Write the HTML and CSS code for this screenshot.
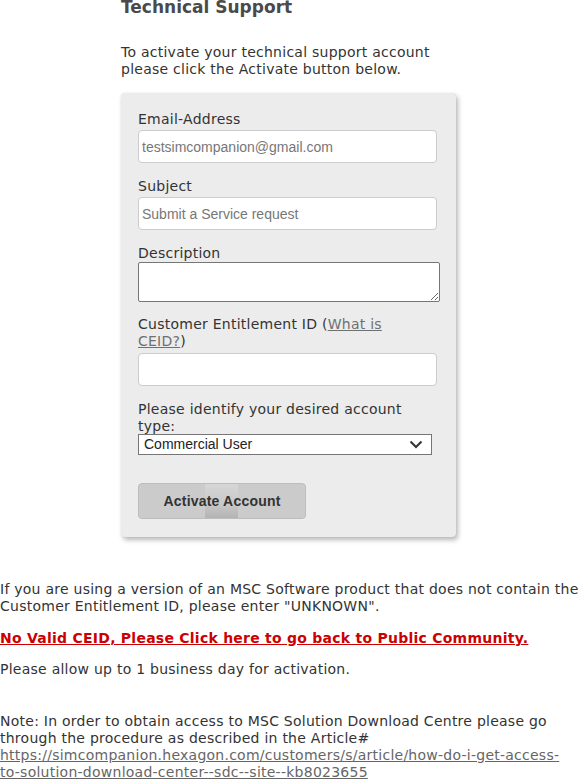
FILE: index.html
```html
<!DOCTYPE html>
<html lang="en">
<head>
<meta charset="utf-8">
<title>Technical Support</title>
<link rel="stylesheet" href="styles.css">
</head>
<body>
<div class="page">
  <section class="main">
    <h2 class="title">Technical Support</h2>
    <p class="intro">To activate your technical support account<br>please click the Activate button below.</p>
    <form class="card">
      <div class="field">
        <label class="label">Email-Address</label>
        <input class="text-input value-muted" type="text" value="testsimcompanion@gmail.com">
      </div>
      <div class="field">
        <label class="label">Subject</label>
        <input class="text-input value-muted" type="text" value="Submit a Service request">
      </div>
      <div class="field">
        <label class="label">Description</label>
        <textarea class="textarea"></textarea>
      </div>
      <div class="field field-ceid">
        <label class="label">Customer Entitlement ID (<a class="help-link" href="#">What is<br>CEID?</a>)</label>
        <input class="text-input" type="text">
      </div>
      <div class="field field-select">
        <label class="label">Please identify your desired account<br>type:</label>
        <div class="select-wrap">
          <select class="select">
            <option>Commercial User</option>
          </select>
          <svg class="chevron" width="14" height="9" viewBox="0 0 14 9"><path d="M1.5 1.5 L7 7 L12.5 1.5" fill="none" stroke="#333" stroke-width="2"/></svg>
        </div>
      </div>
      <button class="activate" type="button"><span class="activate-text">Activate Account</span></button>
    </form>
  </section>
  <section class="info">
    <p class="para">If you are using a version of an MSC Software product that does not contain the<br>Customer Entitlement ID, please enter "UNKNOWN".</p>
    <p class="para para-red"><a class="red-link" href="#">No Valid CEID, Please Click here to go back to Public Community.</a></p>
    <p class="para">Please allow up to 1 business day for activation.</p>
    <p class="para para-note">Note: In order to obtain access to MSC Solution Download Centre please go<br>through the procedure as described in the Article#<br><a class="url-link" href="#">https://simcompanion.hexagon.com/customers/s/article/how-do-i-get-access-<br>to-solution-download-center--sdc--site--kb8023655</a></p>
  </section>
</div>
</body>
</html>
```

FILE: styles.css
```css
html, body {
  margin: 0;
  padding: 0;
  background: #ffffff;
}

body {
  font-family: "DejaVu Sans", Verdana, sans-serif;
  font-size: 14px;
  line-height: 17px;
  letter-spacing: 0.25px;
  color: #333333;
  overflow: hidden;
}

.page {
  display: flex;
  flex-direction: column;
}

.main {
  padding-left: 121px;
  display: flex;
  flex-direction: column;
  align-items: flex-start;
}

.title {
  margin: -1px 0 0 0;
  font-size: 17px;
  line-height: 17px;
  font-weight: bold;
  letter-spacing: 0;
  color: #4a4a4a;
}

.intro {
  margin: 28px 0 0 0;
  white-space: nowrap;
}

.card {
  margin-top: 15px;
  width: 335px;
  box-sizing: border-box;
  padding: 18px 18px 18px 17px;
  background: #ececec;
  border-radius: 4px;
  box-shadow: 2px 3px 5px rgba(0, 0, 0, 0.28), 0 0 1px rgba(0, 0, 0, 0.12);
  display: flex;
  flex-direction: column;
  align-items: flex-start;
}

.field {
  display: flex;
  flex-direction: column;
  margin-bottom: 15px;
}

.label {
  display: block;
  line-height: 17px;
  margin-bottom: 2px;
  white-space: nowrap;
  color: #333333;
}

.text-input {
  display: block;
  box-sizing: border-box;
  width: 299px;
  height: 33px;
  margin: 0;
  padding: 0 3px;
  border: 1px solid #cccccc;
  border-radius: 4px;
  background: #ffffff;
  font-family: "Liberation Sans", Arial, sans-serif;
  font-size: 14px;
  letter-spacing: 0;
  color: #333333;
  outline: none;
}

.value-muted {
  color: #777777;
}

.textarea {
  display: block;
  box-sizing: border-box;
  width: 302px;
  height: 40px;
  margin: -2px 0 0 0;
  padding: 2px;
  border: 1px solid #767676;
  border-radius: 2px;
  background: #ffffff;
  font-family: "Liberation Sans", Arial, sans-serif;
  font-size: 14px;
}

.field-ceid {
  margin-top: -1px;
}

.field-ceid .label {
  margin-bottom: 3px;
}

.help-link {
  color: #707070;
  text-decoration: underline;
}

.field-select {
  margin-bottom: 28px;
}

.field-select .label {
  margin-bottom: -1px;
}

.select-wrap {
  position: relative;
  width: 294px;
}

.select {
  display: block;
  box-sizing: border-box;
  width: 294px;
  height: 21px;
  margin: 0;
  padding: 0 0 0 5px;
  border: 1px solid #767676;
  border-radius: 0;
  background: #ffffff;
  -webkit-appearance: none;
  appearance: none;
  font-family: "Liberation Sans", Arial, sans-serif;
  font-size: 14px;
  letter-spacing: 0;
  line-height: 19px;
  color: #222222;
}

.chevron {
  position: absolute;
  right: 9px;
  top: 6px;
  pointer-events: none;
}

.activate {
  position: relative;
  overflow: hidden;
  isolation: isolate;
  width: 168px;
  height: 36px;
  margin: 0;
  padding: 0;
  border: 1px solid #bdbdbd;
  border-radius: 4px;
  background: #cbcbcb;
  font-family: "Liberation Sans", Arial, sans-serif;
  font-size: 14px;
  font-weight: bold;
  letter-spacing: 0.2px;
  color: #333333;
}

.activate::before {
  content: "";
  position: absolute;
  left: 66px;
  top: 0;
  width: 33px;
  height: 100%;
  background: linear-gradient(to bottom, #d6d6d6, #c8c8c8 60%, #b3b3b3);
  z-index: 0;
}

.activate-text {
  position: relative;
  z-index: 1;
}

.info {
  margin-top: 44px;
  display: flex;
  flex-direction: column;
}

.para {
  margin: 0;
  white-space: nowrap;
}

.para-red {
  margin-top: 15px;
}

.red-link {
  color: #cc0000;
  font-weight: bold;
  text-decoration: underline;
}

.para-red + .para {
  margin-top: 14px;
}

.para-note {
  margin-top: 35px;
}

.url-link {
  color: #666666;
  text-decoration: underline;
}
```
